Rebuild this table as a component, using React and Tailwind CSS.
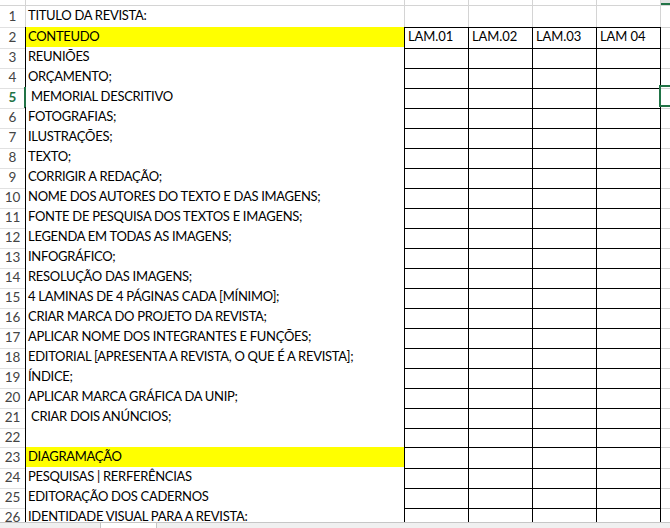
import React from 'react';

const rows = [
  { n: 1, text: 'TITULO DA REVISTA:' },
  { n: 2, text: 'CONTEUDO', yellow: true, lams: ['LAM.01', 'LAM.02', 'LAM.03', 'LAM 04'] },
  { n: 3, text: 'REUNIÕES' },
  { n: 4, text: 'ORÇAMENTO;' },
  { n: 5, text: ' MEMORIAL DESCRITIVO', selected: true },
  { n: 6, text: 'FOTOGRAFIAS;' },
  { n: 7, text: 'ILUSTRAÇÕES;' },
  { n: 8, text: 'TEXTO;' },
  { n: 9, text: 'CORRIGIR A REDAÇÃO;' },
  { n: 10, text: 'NOME DOS AUTORES DO TEXTO E DAS IMAGENS;' },
  { n: 11, text: 'FONTE DE PESQUISA DOS TEXTOS E IMAGENS;' },
  { n: 12, text: 'LEGENDA EM TODAS AS IMAGENS;' },
  { n: 13, text: 'INFOGRÁFICO;' },
  { n: 14, text: 'RESOLUÇÃO DAS IMAGENS;' },
  { n: 15, text: '4 LAMINAS DE 4 PÁGINAS CADA [MÍNIMO];' },
  { n: 16, text: 'CRIAR MARCA DO PROJETO DA REVISTA;' },
  { n: 17, text: 'APLICAR NOME DOS INTEGRANTES E FUNÇÕES;' },
  { n: 18, text: 'EDITORIAL [APRESENTA A REVISTA, O QUE É A REVISTA];' },
  { n: 19, text: 'ÍNDICE;' },
  { n: 20, text: 'APLICAR MARCA GRÁFICA DA UNIP;' },
  { n: 21, text: ' CRIAR DOIS ANÚNCIOS;' },
  { n: 22, text: '' },
  { n: 23, text: 'DIAGRAMAÇÃO', yellow: true },
  { n: 24, text: 'PESQUISAS | RERFERÊNCIAS' },
  { n: 25, text: 'EDITORAÇÃO DOS CADERNOS' },
  { n: 26, text: 'IDENTIDADE VISUAL PARA A REVISTA:' },
];

const cols = 'grid grid-cols-[26px_379px_64px_64px_64px_64px_1fr]';

function Row({ row }) {
  const first = row.n === 1;
  const h = first ? 'h-[21px]' : 'h-[20px]';
  const edge = first ? 'border-r-[#d4d4d4]' : 'border-r-black';
  return (
    <div className={`${cols} ${h}`}>
      <div
        className={`flex items-center justify-center border-b border-r border-b-[#e1e1e1] text-[13.5px] ${
          row.selected
            ? 'border-r-[#217346] shadow-[inset_-1px_0_0_#217346] font-bold text-[#217346]'
            : `${edge} text-[#444]`
        }`}
      >
        {row.n}
      </div>
      <div
        className={`flex items-end pb-[1px] pl-[2px] border-b border-r border-b-black ${edge} whitespace-pre text-[13px] tracking-[-0.3px] text-black ${
          row.yellow ? 'bg-[#ffff00]' : 'bg-white'
        }`}
      >
        {row.text}
      </div>
      {[0, 1, 2, 3].map((i) => (
        <div
          key={i}
          className={`flex items-end pb-[1px] pl-[3px] border-b border-r border-b-black ${edge} text-[13px] tracking-[-0.1px] text-black`}
        >
          {row.lams ? row.lams[i] : ''}
        </div>
      ))}
      <div className="relative border-b border-b-[#d4d4d4]">
        {row.selected && (
          <div className="absolute left-[-2px] top-[-2px] h-[22px] w-[20px] border-2 border-[#217346]" />
        )}
      </div>
    </div>
  );
}

export default function App() {
  return (
    <div className="w-[670px] h-[528px] flex flex-col overflow-hidden bg-white font-['Lato',sans-serif]">
      <div className="flex-1 overflow-hidden">
        <div className="h-[6px] overflow-hidden border-b border-[#d4d4d4]">
          <div className={`${cols} h-[20px] mt-[-15px] text-[13.5px] text-[#444]`}>
            <div className="border-r border-[#d4d4d4]" />
            {['A', 'B', 'C', 'D', 'E'].map((c) => (
              <div key={c} className="flex items-center justify-center border-r border-[#d4d4d4]">
                {c}
              </div>
            ))}
            <div className="flex items-center justify-center bg-[#e1e1e1] text-[#217346] shadow-[inset_0_-2px_0_#217346]">
              F
            </div>
          </div>
        </div>
        {rows.map((r) => (
          <Row key={r.n} row={r} />
        ))}
      </div>
      <div className="h-[6px] flex border-t border-[#c6c6c6] bg-[#f0f0f0]">
        <div className="w-[100px]" />
        <div className="w-[57px] bg-white border-x border-[#c6c6c6]" />
      </div>
    </div>
  );
}
